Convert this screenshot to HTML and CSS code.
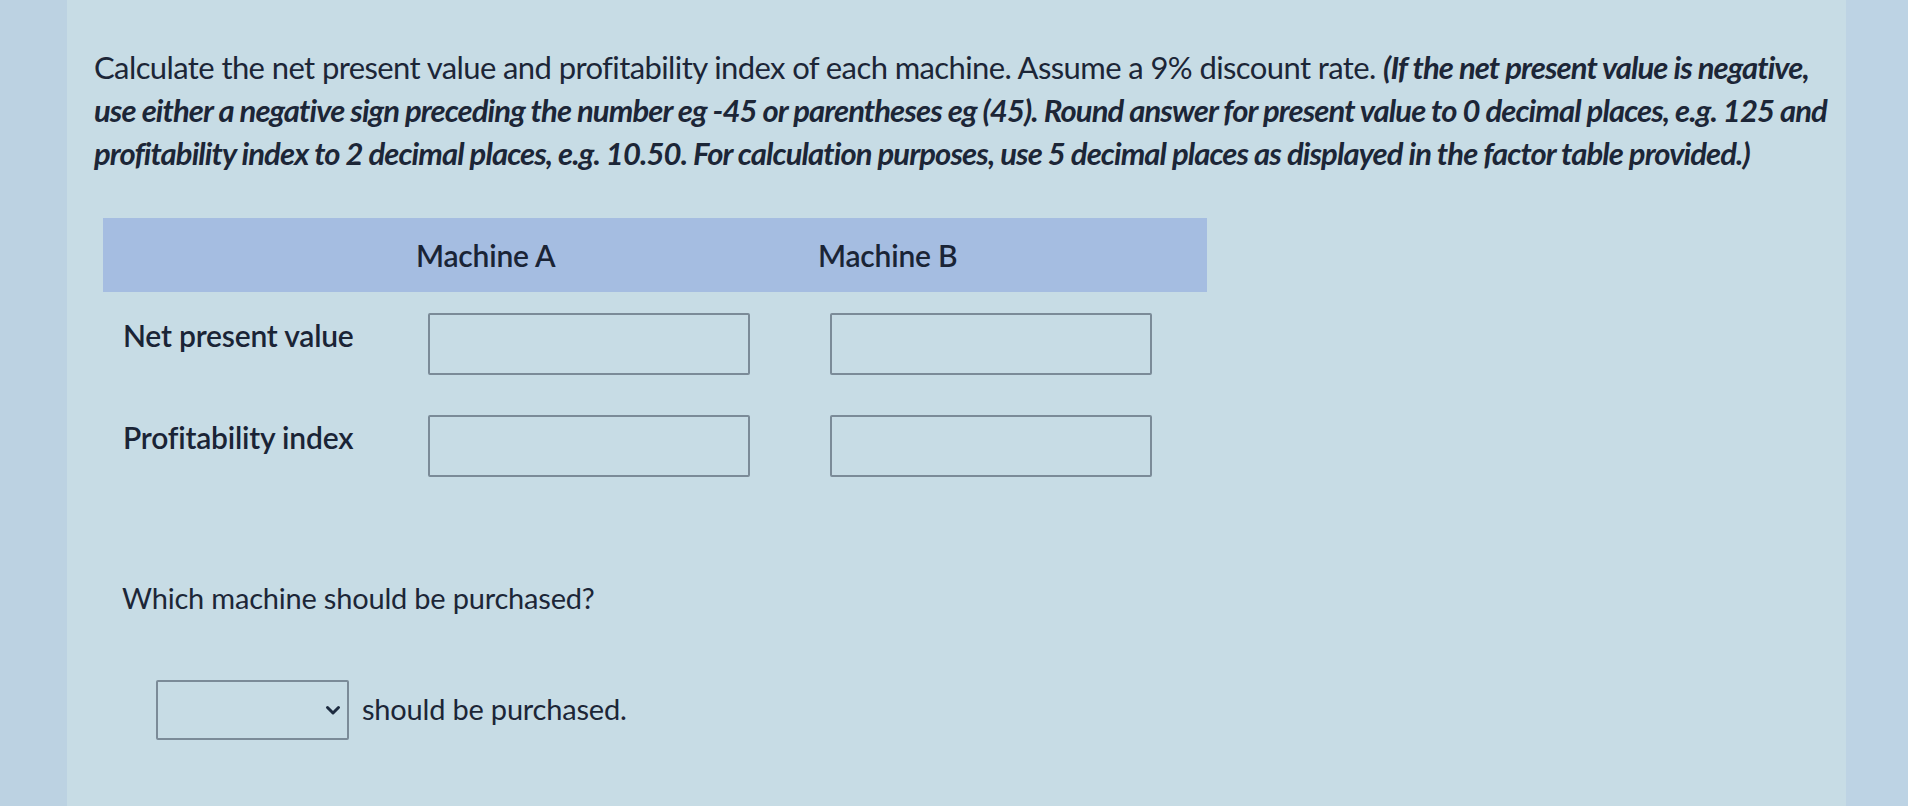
FILE: index.html
```html
<!DOCTYPE html>
<html>
<head>
<meta charset="utf-8">
<link rel="stylesheet" href="styles.css">
</head>
<body>
<div class="screen">
  <div class="edge edge-left"></div>
  <main class="page">
    <p class="prompt">Calculate the net present value and profitability index of each machine. Assume a 9% discount rate. <em>(If the net present value is negative,<br>use either a negative sign preceding the number eg -45 or parentheses eg (45). Round answer for present value to 0 decimal places, e.g. 125 and<br>profitability index to 2 decimal places, e.g. 10.50. For calculation purposes, use 5 decimal places as displayed in the factor table provided.)</em></p>

    <div class="grid">
      <div class="head-row">
        <div class="head-cell"></div>
        <div class="head-cell">Machine A</div>
        <div class="head-cell">Machine B</div>
      </div>
      <div class="row">
        <div class="label">Net present value</div>
        <div class="cell"><input class="field" type="text"></div>
        <div class="cell"><input class="field" type="text"></div>
      </div>
      <div class="row">
        <div class="label">Profitability index</div>
        <div class="cell"><input class="field" type="text"></div>
        <div class="cell"><input class="field" type="text"></div>
      </div>
    </div>

    <p class="question">Which machine should be purchased?</p>

    <div class="answer">
      <div class="select">
        <svg class="chev" viewBox="0 0 16 11" width="16" height="11"><path d="M2.5 2.5 L8 8 L13.5 2.5" fill="none" stroke="#1d2b40" stroke-width="3" stroke-linecap="round" stroke-linejoin="round"/></svg>
      </div>
      <span class="answer-text">should be purchased.</span>
    </div>
  </main>
  <div class="edge edge-right"></div>
</div>
</body>
</html>
```

FILE: styles.css
```css
* { box-sizing: border-box; }

html, body {
  margin: 0;
  padding: 0;
  height: 100%;
}

body {
  background: #c7dce5;
  font-family: Lato, "Open Sans", sans-serif;
  color: #1c2637;
  overflow: hidden;
}

.screen {
  display: flex;
  width: 1908px;
  height: 806px;
}

.edge {
  flex: none;
  height: 100%;
}

.edge-left {
  width: 67px;
  background: #bcd2e2;
}

.edge-right {
  width: 62px;
  background: #bdd3e4;
}

.page {
  flex: 1;
  padding: 46px 0 0 27px;
}

.prompt {
  margin: 0;
  font-size: 31px;
  letter-spacing: -0.6px;
  line-height: 43px;
  white-space: nowrap;
}

.prompt em {
  font-style: italic;
  font-weight: 700;
  letter-spacing: -0.9px;
}

.grid {
  margin: 43px 0 0 9px;
  width: 1104px;
}

.head-row {
  display: grid;
  grid-template-columns: 313px 402px 1fr;
  height: 74px;
  align-items: center;
  background: #a5bde1;
}

.head-cell {
  font-size: 30px;
  font-weight: 600;
  letter-spacing: -0.2px;
  color: #1a2436;
}

.row {
  display: grid;
  grid-template-columns: 313px 402px 1fr;
  align-items: center;
  height: 62px;
  margin-top: 21px;
}

.row + .row {
  margin-top: 40px;
}

.label {
  padding-left: 20px;
  padding-bottom: 18px;
  font-size: 30px;
  font-weight: 600;
  letter-spacing: -0.2px;
  color: #1a2436;
}

.cell {
  padding-left: 12px;
}

.field {
  display: block;
  width: 322px;
  height: 62px;
  border: 2px solid #7b8b98;
  border-radius: 2px;
  background: transparent;
  outline: none;
}

.question {
  margin: 101px 0 0 28px;
  font-size: 29px;
  line-height: 40px;
  letter-spacing: -0.2px;
}

.answer {
  display: flex;
  align-items: center;
  gap: 13px;
  margin: 62px 0 0 62px;
}

.select {
  width: 193px;
  height: 60px;
  border: 2px solid #7b8b98;
  border-radius: 2px;
  display: flex;
  align-items: center;
  justify-content: flex-end;
  padding-right: 6px;
}

.chev {
  display: block;
}

.answer-text {
  font-size: 29px;
  letter-spacing: -0.2px;
  padding-bottom: 4px;
}
```
